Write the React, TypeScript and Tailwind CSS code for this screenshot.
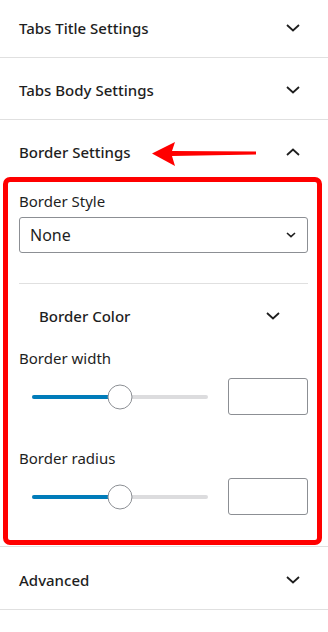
import React from "react";

const font = { fontFamily: '"Noto Sans", "Open Sans", sans-serif' };

function Chevron({ up = false }: { up?: boolean }) {
  return (
    <svg width="14" height="8" viewBox="0 0 14 8" fill="none" className="block">
      {up ? (
        <path d="M1 7L7 1.5L13 7" stroke="#1e1e1e" strokeWidth="1.8" />
      ) : (
        <path d="M1 1L7 6.5L13 1" stroke="#1e1e1e" strokeWidth="1.8" />
      )}
    </svg>
  );
}

function SmallChevron() {
  return (
    <svg width="10" height="6" viewBox="0 0 10 6" fill="none" className="block">
      <path d="M1 1L5 4.6L9 1" stroke="#1e1e1e" strokeWidth="1.6" />
    </svg>
  );
}

function Header({ title, h, pt, up = false }: { title: string; h: string; pt: string; up?: boolean }) {
  return (
    <div className={`flex items-start justify-between pl-[19px] pr-[28px] ${h} ${pt}`}>
      <span className="text-[15px] leading-[20px] font-medium text-[#1e1e1e]">{title}</span>
      <div className="pt-[6px]">
        <Chevron up={up} />
      </div>
    </div>
  );
}

function SliderRow({ pct }: { pct: number }) {
  return (
    <div className="flex items-center h-[37px]">
      <div className="relative w-[202px] h-[37px] flex items-center px-[13px]">
        <div className="relative w-full h-[4px] bg-[#dcdcde] rounded-full">
          <div className="absolute left-0 top-0 h-[4px] bg-[#007cba] rounded-full" style={{ width: `${pct}%` }} />
          <div
            className="absolute top-1/2 w-[25px] h-[25px] rounded-full bg-white border border-[#8c8f94]"
            style={{ left: `${pct}%`, transform: "translate(-50%, -50%)" }}
          />
        </div>
      </div>
      <div className="ml-[7px] w-[80px] h-[37px] rounded-[3px] border border-[#8c8f94] bg-white" />
    </div>
  );
}

export default function App() {
  return (
    <div className="w-[328px] h-[632px] bg-white overflow-hidden relative" style={font}>
      <Header title="Tabs Title Settings" h="h-[57px]" pt="pt-[18px]" />
      <div className="h-px bg-[#e0e0e0]" />
      <Header title="Tabs Body Settings" h="h-[61px]" pt="pt-[22px]" />
      <div className="h-px bg-[#e0e0e0]" />
      <div className="relative">
        <Header title="Border Settings" h="h-[57px]" pt="pt-[22px]" up />
        <svg
          className="absolute left-[150px] top-[20px]"
          width="110"
          height="28"
          viewBox="0 0 110 28"
        >
          <path d="M2 13.5L25 2L22 11L106 11.5L106 14.5L22 16L25 26Z" fill="#ff0000" />
        </svg>
      </div>
      <div className="ml-[3px] w-[319px] border-[5px] border-[#ff0000] rounded-[7px] pl-[11px] pr-[9px] pt-[9px] pb-[25px]">
        <div className="text-[15px] leading-[20px] text-[#1e1e1e]">Border Style</div>
        <div className="mt-[6px] h-[36px] rounded-[3px] border border-[#8c8f94] flex items-center justify-between pl-[10px] pr-[11px]">
          <span className="text-[16px] text-[#1e1e1e]">None</span>
          <SmallChevron />
        </div>
        <div className="mt-[30px] h-px bg-[#e0e0e0]" />
        <div className="mt-[22px] flex items-center justify-between pl-[20px] pr-[28px] h-[20px]">
          <span className="text-[15px] leading-[20px] font-medium text-[#1e1e1e]">Border Color</span>
          <Chevron />
        </div>
        <div className="mt-[22px] text-[15px] leading-[20px] text-[#1e1e1e]">Border width</div>
        <div className="mt-[10px]">
          <SliderRow pct={50} />
        </div>
        <div className="mt-[33px] text-[15px] leading-[20px] text-[#1e1e1e]">Border radius</div>
        <div className="mt-[10px]">
          <SliderRow pct={50} />
        </div>
      </div>
      <div className="mt-px h-px bg-[#e0e0e0]" />
      <Header title="Advanced" h="h-[62px]" pt="pt-[23px]" />
      <div className="h-px bg-[#e0e0e0]" />
    </div>
  );
}
